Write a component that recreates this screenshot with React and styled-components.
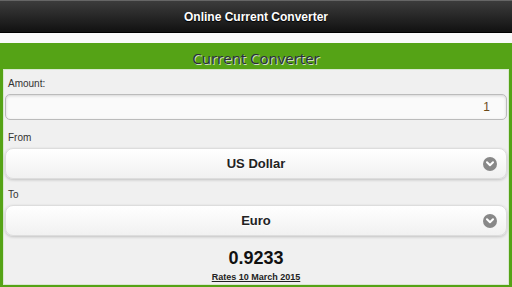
import React from 'react';
import styled, { createGlobalStyle } from 'styled-components';

const Global = createGlobalStyle`
  body {
    margin: 0;
    background: #f9f9f9;
    font-family: 'Liberation Sans', Arial, sans-serif;
  }
`;

const Header = styled.header`
  height: 31px;
  background: linear-gradient(#3c3c3c, #111);
  border-top: 1px solid #666;
  border-bottom: 1px solid #000;
  display: flex;
  align-items: center;
  justify-content: center;
  color: #fff;
  font-weight: bold;
  font-size: 12px;
  text-shadow: 0 1px 1px #000;
`;

const Content = styled.div`
  padding-top: 10px;
`;

const Panel = styled.div`
  background: #55a316;
  padding: 0 3px 4px;
`;

const PanelTitle = styled.h2`
  margin: 0;
  height: 26px;
  padding-top: 5px;
  box-sizing: border-box;
  text-align: center;
  line-height: 20px;
  font-family: 'Open Sans', sans-serif;
  font-weight: normal;
  font-size: 15px;
  color: #2c2c3c;
  text-shadow: 1px 1px 0 #d0dcc8;
`;

const Body = styled.div`
  background: #f0f0f0;
  border: 1px solid #d8e8d0;
  padding: 8px 1px 1px 1px;
`;

const Label = styled.label`
  display: block;
  font-size: 10px;
  line-height: 12px;
  color: #333;
  margin: ${p => p.$top || 0}px 0 4px 3px;
`;

const Input = styled.div`
  height: 26px;
  box-sizing: border-box;
  background: #fafafa;
  border: 1px solid #bbb;
  border-radius: 5px;
  box-shadow: inset 0 1px 3px rgba(0, 0, 0, 0.15);
  display: flex;
  align-items: center;
  justify-content: flex-end;
  padding-right: 16px;
  font-size: 12px;
  color: #6b4a1a;
`;

const Select = styled.div`
  position: relative;
  height: 31px;
  box-sizing: border-box;
  background: linear-gradient(#fff, #f1f1f1);
  border: 1px solid #ddd;
  border-radius: 8px;
  box-shadow: 0 1px 3px rgba(0, 0, 0, 0.2);
  display: flex;
  align-items: center;
  justify-content: center;
  font-size: 13px;
  font-weight: bold;
  color: #222;
  text-shadow: 0 1px 0 #fff;
`;

const Arrow = styled.span`
  position: absolute;
  right: 9px;
  top: 50%;
  margin-top: -7px;
  width: 14px;
  height: 14px;
  border-radius: 50%;
  background: #888;
  display: flex;
  align-items: center;
  justify-content: center;
`;

const Result = styled.div`
  text-align: center;
  font-size: 18px;
  line-height: 20px;
  font-weight: bold;
  color: #111;
  margin-top: 12px;
`;

const Rates = styled.a`
  display: block;
  text-align: center;
  font-size: 9px;
  line-height: 11px;
  font-weight: bold;
  color: #222;
  text-decoration: underline;
  margin-top: 4px;
`;

const Chevron = () => (
  <svg width="8" height="6" viewBox="0 0 8 6">
    <path d="M1 1.2 L4 4.2 L7 1.2" fill="none" stroke="#fff" strokeWidth="2" strokeLinecap="round" strokeLinejoin="round" />
  </svg>
);

export default function App() {
  return (
    <>
      <Global />
      <Header>Online Current Converter</Header>
      <Content>
        <Panel>
          <PanelTitle>Current Converter</PanelTitle>
          <Body>
            <Label>Amount:</Label>
            <Input>1</Input>
            <Label $top={12}>From</Label>
            <Select>US Dollar<Arrow><Chevron /></Arrow></Select>
            <Label $top={10}>To</Label>
            <Select>Euro<Arrow><Chevron /></Arrow></Select>
            <Result>0.9233</Result>
            <Rates href="#">Rates 10 March 2015</Rates>
          </Body>
        </Panel>
      </Content>
    </>
  );
}
